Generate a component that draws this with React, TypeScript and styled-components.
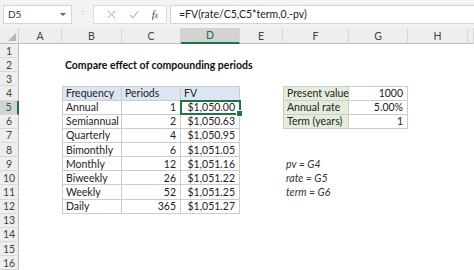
import React from "react";
import styled, { createGlobalStyle, css } from "styled-components";

const GlobalStyle = createGlobalStyle`
  html, body {
    margin: 0;
    padding: 0;
    background: #ffffff;
  }
  body {
    font-family: Lato, "Open Sans", sans-serif;
    color: #222222;
    overflow: hidden;
  }
`;

const COLS = ["A", "B", "C", "D", "E", "F", "G", "H"];
const ROWS = Array.from({ length: 16 }, (_, i) => i + 1);
const SELECTED = { col: "D", row: 5 };

type Kind = "title" | "head" | "label" | "text" | "num" | "note";
type CellData = { v: string; kind: Kind };

const DATA: Record<string, CellData> = {
  B2: { v: "Compare effect of compounding periods", kind: "title" },
  B4: { v: "Frequency", kind: "head" },
  C4: { v: "Periods", kind: "head" },
  D4: { v: "FV", kind: "head" },
  F4: { v: "Present value", kind: "label" },
  G4: { v: "1000", kind: "num" },
  F5: { v: "Annual rate", kind: "label" },
  G5: { v: "5.00%", kind: "num" },
  F6: { v: "Term (years)", kind: "label" },
  G6: { v: "1", kind: "num" },
  F9: { v: "pv = G4", kind: "note" },
  F10: { v: "rate = G5", kind: "note" },
  F11: { v: "term = G6", kind: "note" },
};

const FREQ: [string, string, string][] = [
  ["Annual", "1", "$1,050.00"],
  ["Semiannual", "2", "$1,050.63"],
  ["Quarterly", "4", "$1,050.95"],
  ["Bimonthly", "6", "$1,051.05"],
  ["Monthly", "12", "$1,051.16"],
  ["Biweekly", "26", "$1,051.22"],
  ["Weekly", "52", "$1,051.25"],
  ["Daily", "365", "$1,051.27"],
];
FREQ.forEach(([name, periods, fv], i) => {
  const r = i + 5;
  DATA[`B${r}`] = { v: name, kind: "text" };
  DATA[`C${r}`] = { v: periods, kind: "num" };
  DATA[`D${r}`] = { v: fv, kind: "num" };
});

const TABLES = [
  { c1: 1, c2: 3, r1: 4, r2: 12 },
  { c1: 5, c2: 6, r1: 4, r2: 6 },
];

const tableEdge = (ci: number, r: number) => {
  const t = TABLES.find((t) => ci >= t.c1 && ci <= t.c2 && r >= t.r1 && r <= t.r2);
  if (!t) return null;
  return { top: r === t.r1, left: ci === t.c1 };
};

/* ---------- formula bar ---------- */

const FormulaBar = styled.div`
  height: 28px;
  background: #f3f3f3;
  display: flex;
  align-items: center;
  padding-left: 3px;
  box-sizing: border-box;
`;

const NameBox = styled.div`
  width: 69px;
  height: 19px;
  box-sizing: border-box;
  background: #ffffff;
  border: 1px solid #d4d4d4;
  display: flex;
  align-items: center;
  justify-content: space-between;
  padding: 0 5px 0 4px;
  font-size: 10px;
  color: #333333;
`;

const Caret = styled.span`
  width: 0;
  height: 0;
  border-left: 3px solid transparent;
  border-right: 3px solid transparent;
  border-top: 3px solid #666666;
`;

const Dots = styled.div`
  width: 21px;
  display: flex;
  flex-direction: column;
  align-items: center;
  gap: 2px;
  span {
    width: 1px;
    height: 1px;
    background: #b8b8b8;
  }
`;

const IconBox = styled.div`
  width: 74px;
  height: 19px;
  box-sizing: border-box;
  background: #ffffff;
  border: 1px solid #dcdcdc;
  display: flex;
  align-items: center;
  justify-content: space-around;
  padding: 0 2px 0 6px;
`;

const Fx = styled.span`
  font-family: "Liberation Serif", serif;
  font-style: italic;
  font-size: 11px;
  color: #444444;
  letter-spacing: -0.5px;
  small {
    font-size: 8px;
  }
`;

const FormulaInput = styled.div`
  flex: 1;
  height: 19px;
  margin-left: 3px;
  box-sizing: border-box;
  background: #ffffff;
  border: 1px solid #d4d4d4;
  border-right: none;
  display: flex;
  align-items: center;
  padding-left: 8px;
  font-size: 10.5px;
  color: #222222;
  white-space: nowrap;
`;

/* ---------- sheet ---------- */

const Sheet = styled.div`
  display: grid;
  grid-template-columns: 19px 43px 60px 59px 59px 43px 66px 59px 60px 1fr;
  grid-template-rows: 16px;
  grid-auto-rows: 14.15px;
  font-size: 10.5px;
`;

const Corner = styled.div`
  background: #eeeeee;
  border-right: 1px solid #cfcfcf;
  border-bottom: 1px solid #bdbdbd;
  box-sizing: border-box;
  display: flex;
  align-items: flex-end;
  justify-content: flex-end;
  padding: 0 2px 2px 0;
`;

const ColHead = styled.div<{ $active?: boolean }>`
  background: ${({ $active }) => ($active ? "#d3d3d3" : "#eeeeee")};
  color: ${({ $active }) => ($active ? "#1e6b3f" : "#444444")};
  border-right: 1px solid #d6d6d6;
  border-bottom: ${({ $active }) => ($active ? "2px solid #217346" : "1px solid #bdbdbd")};
  box-sizing: border-box;
  display: flex;
  align-items: center;
  justify-content: center;
  font-size: 10.5px;
`;

const RowHead = styled.div<{ $active?: boolean }>`
  background: ${({ $active }) => ($active ? "#d3d3d3" : "#eeeeee")};
  color: ${({ $active }) => ($active ? "#1e6b3f" : "#444444")};
  border-right: ${({ $active }) => ($active ? "2px solid #217346" : "1px solid #bdbdbd")};
  border-bottom: 1px solid #d9d9d9;
  box-sizing: border-box;
  display: flex;
  align-items: center;
  justify-content: center;
  font-size: 10.5px;
`;

const Cell = styled.div<{
  $kind?: Kind;
  $inTable?: boolean;
  $top?: boolean;
  $left?: boolean;
}>`
  position: relative;
  box-sizing: border-box;
  display: flex;
  align-items: center;
  padding: 0 4px 0 3px;
  white-space: nowrap;
  overflow: visible;
  color: #222222;

  ${({ $inTable, $top, $left }) =>
    $inTable &&
    css`
      border-right: 1px solid #cccccc;
      border-bottom: 1px solid #cccccc;
      ${$top && "border-top: 1px solid #cccccc;"}
      ${$left && "border-left: 1px solid #cccccc;"}
    `}

  ${({ $kind }) => {
    switch ($kind) {
      case "title":
        return css`
          font-weight: 700;
          font-size: 10.5px;
          color: #111111;
          z-index: 1;
        `;
      case "head":
        return css`
          background: #dce5f2;
        `;
      case "label":
        return css`
          background: #e2eedb;
        `;
      case "num":
        return css`
          justify-content: flex-end;
        `;
      case "note":
        return css`
          font-style: italic;
          color: #333333;
          z-index: 1;
        `;
      default:
        return "";
    }
  }}
`;

const Selection = styled.div`
  position: absolute;
  inset: -1px -2px -1px -1px;
  border: 2px solid #217346;
  pointer-events: none;
  z-index: 2;
  &::after {
    content: "";
    position: absolute;
    right: -4px;
    bottom: -4px;
    width: 5px;
    height: 5px;
    background: #217346;
    border: 1px solid #ffffff;
  }
`;

const Filler = styled.div`
  background: #ffffff;
`;

const XIcon = () => (
  <svg width="9" height="9" viewBox="0 0 9 9">
    <path d="M1 1 L8 8 M8 1 L1 8" stroke="#a6a6a6" strokeWidth="1" fill="none" />
  </svg>
);

const CheckIcon = () => (
  <svg width="10" height="9" viewBox="0 0 10 9">
    <path d="M1 5 L4 8 L9 1" stroke="#a6a6a6" strokeWidth="1" fill="none" />
  </svg>
);

const CornerMark = () => (
  <svg width="8" height="8" viewBox="0 0 8 8">
    <polygon points="8,0 8,8 0,8" fill="#b5b5b5" />
  </svg>
);

export default function App() {
  return (
    <>
      <GlobalStyle />
      <FormulaBar>
        <NameBox>
          <span>D5</span>
          <Caret />
        </NameBox>
        <Dots>
          <span />
          <span />
          <span />
        </Dots>
        <IconBox>
          <XIcon />
          <CheckIcon />
          <Fx>
            f<small>x</small>
          </Fx>
        </IconBox>
        <FormulaInput>=FV(rate/C5,C5*term,0,-pv)</FormulaInput>
      </FormulaBar>
      <Sheet>
        <Corner>
          <CornerMark />
        </Corner>
        {COLS.map((c) => (
          <ColHead key={c} $active={c === SELECTED.col}>
            {c}
          </ColHead>
        ))}
        <ColHead />
        {ROWS.map((r) => (
          <React.Fragment key={r}>
            <RowHead $active={r === SELECTED.row}>{r}</RowHead>
            {COLS.map((c, ci) => {
              const ref = `${c}${r}`;
              const d = DATA[ref];
              const edge = tableEdge(ci, r);
              const selected = c === SELECTED.col && r === SELECTED.row;
              return (
                <Cell
                  key={ref}
                  $kind={d?.kind}
                  $inTable={!!edge}
                  $top={edge?.top}
                  $left={edge?.left}
                >
                  {d?.v}
                  {selected && <Selection />}
                </Cell>
              );
            })}
            <Filler />
          </React.Fragment>
        ))}
      </Sheet>
    </>
  );
}
